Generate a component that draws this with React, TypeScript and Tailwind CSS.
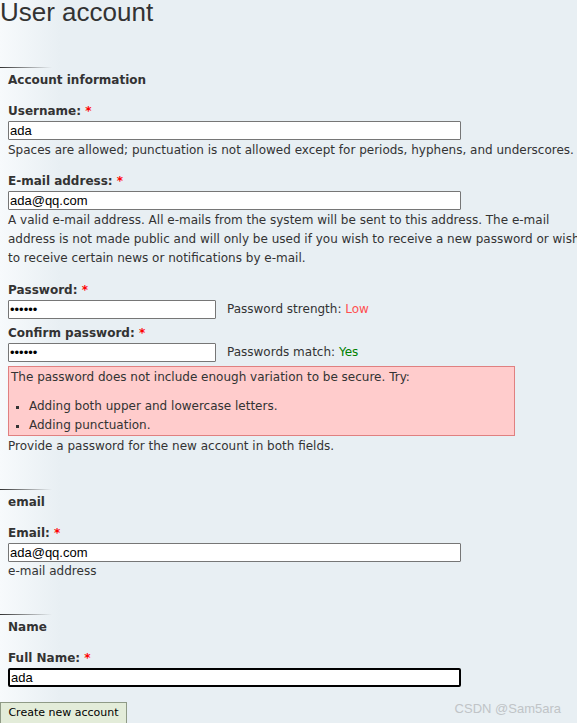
import React from "react";

const font = "font-['DejaVu_Sans',sans-serif]";

function Req() {
  return <span className="text-[#ff0000]"> *</span>;
}

function Legend({ children }: { children: React.ReactNode }) {
  return (
    <div>
      <div className="h-px w-[52px] bg-gradient-to-r from-[#333] to-transparent" />
      <div className="px-2 pt-[3px] font-bold">{children}</div>
    </div>
  );
}

function Label({ children }: { children: React.ReactNode }) {
  return (
    <div className="font-bold leading-[19px]">
      {children}
      <Req />
    </div>
  );
}

function TextInput({ value, wide = true, focused = false }: { value: string; wide?: boolean; focused?: boolean }) {
  return (
    <div
      className={
        "h-[19px] bg-white flex items-center pl-[1px] font-['Liberation_Sans',sans-serif] text-[13px] text-black " +
        (wide ? "w-[453px] " : "w-[208px] ") +
        (focused ? "border-2 border-black rounded-[2px]" : "border border-[#767676] rounded-[1px]")
      }
    >
      {value}
    </div>
  );
}

export default function App() {
  return (
    <main className={`min-h-[723px] w-[577px] overflow-hidden bg-[linear-gradient(90deg,#f7fafc_0px,#e8eff3_60px)] text-[#333] text-[12px] ${font} relative`}>
      <h1 className="font-['Liberation_Sans',sans-serif] text-[26px] leading-[26px] text-[#333] -mt-px">User account</h1>

      <div className="mt-[42px]">
        <Legend>Account information</Legend>
        <div className="px-2 mt-[13px] leading-[19px]">
          <Label>Username:</Label>
          <TextInput value="ada" />
          <div className="mt-px whitespace-nowrap">Spaces are allowed; punctuation is not allowed except for periods, hyphens, and underscores.</div>

          <div className="mt-[12px]">
            <Label>E-mail address:</Label>
            <TextInput value="ada@qq.com" />
            <div className="mt-px w-[580px]">
              A valid e-mail address. All e-mails from the system will be sent to this address. The e-mail address is not made public and will only be used if you wish to receive a new password or wish to receive certain news or notifications by e-mail.
            </div>
          </div>

          <div className="mt-[13px]">
            <Label>Password:</Label>
            <div className="flex items-center gap-[11px]">
              <TextInput value="••••••" wide={false} />
              <div>Password strength: <span className="text-[#ff5050]">Low</span></div>
            </div>
            <div className="mt-[5px]">
              <Label>Confirm password:</Label>
            </div>
            <div className="flex items-center gap-[11px]">
              <TextInput value="••••••" wide={false} />
              <div>Passwords match: <span className="text-[#008000]">Yes</span></div>
            </div>
            <div className="mt-[4px] w-[507px] bg-[#ffcccc] border border-[#e08080] px-[2px]">
              <div className="pt-px">The password does not include enough variation to be secure. Try:</div>
              <ul className="mt-[10px] list-[square] pl-[18px]">
                <li className="marker:text-[11px]">Adding both upper and lowercase letters.</li>
                <li className="marker:text-[11px]">Adding punctuation.</li>
              </ul>
            </div>
            <div className="mt-px">Provide a password for the new account in both fields.</div>
          </div>
        </div>
      </div>

      <div className="mt-[33px]">
        <Legend>email</Legend>
        <div className="px-2 mt-[13px] leading-[19px]">
          <Label>Email:</Label>
          <TextInput value="ada@qq.com" />
          <div>e-mail address</div>
        </div>
      </div>

      <div className="mt-[33px]">
        <Legend>Name</Legend>
        <div className="px-2 mt-[13px] leading-[19px]">
          <Label>Full Name:</Label>
          <TextInput value="ada" focused />
        </div>
      </div>

      <div className="mt-[15px]">
        <button className="h-[22px] w-[127px] bg-[#e3ecd9] border border-[#8f9a86] text-black text-[11px] leading-[20px]">Create new account</button>
      </div>

      {/* watermark over the page */}
      <span className="absolute right-[16px] bottom-[6px] text-[13px] text-[#c0c4c7] font-['Liberation_Sans',sans-serif]">CSDN @Sam5ara</span>
    </main>
  );
}
